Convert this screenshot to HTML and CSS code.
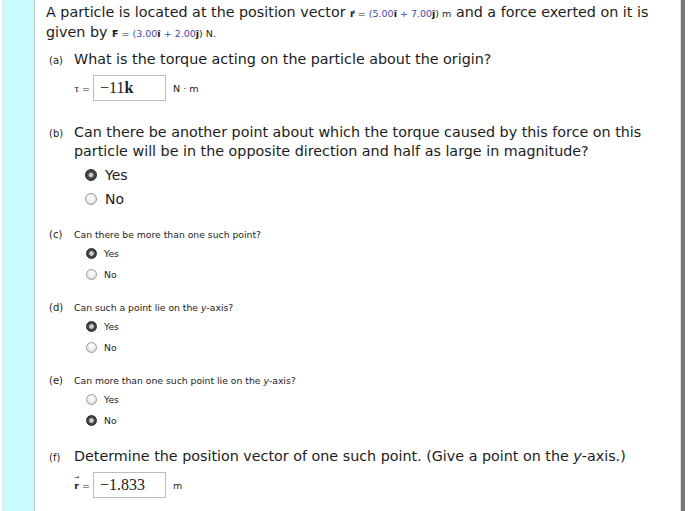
FILE: index.html
```html
<!DOCTYPE html>
<html>
<head>
<meta charset="utf-8">
<link rel="stylesheet" href="styles.css">
</head>
<body>
<div class="page">
  <div class="strip"></div>
  <div class="content">
    <p class="intro">A particle is located at the position vector <span class="m"><span class="vec">r</span> = <span class="num">(5.00</span><b>î</b> <span class="num">+ 7.00</span><b>ĵ</b>) m</span> and a force exerted on it is given by <span class="m"><span class="vec">F</span> = <span class="num">(3.00</span><b>î</b> <span class="num">+ 2.00</span><b>ĵ</b>) N.</span></p>

    <div class="part big q-a">
      <span class="lbl">(a)</span>
      <div class="qtext">What is the torque acting on the particle about the origin?</div>
    </div>
    <div class="answer">
      <span class="alabel"><span class="tau">τ</span> =</span>
      <span class="box">−11<b>k</b></span>
      <span class="unit">N · m</span>
    </div>

    <div class="part big q-b">
      <span class="lbl">(b)</span>
      <div class="qtext">Can there be another point about which the torque caused by this force on this particle will be in the opposite direction and half as large in magnitude?</div>
    </div>
    <div class="choices big-choices">
      <div class="radio"><span class="dot on"></span>Yes</div>
      <div class="radio"><span class="dot"></span>No</div>
    </div>

    <div class="part small q-c">
      <span class="lbl">(c)</span>
      <div class="qtext">Can there be more than one such point?</div>
    </div>
    <div class="choices small-choices">
      <div class="radio"><span class="dot on"></span>Yes</div>
      <div class="radio"><span class="dot"></span>No</div>
    </div>

    <div class="part small q-d">
      <span class="lbl">(d)</span>
      <div class="qtext">Can such a point lie on the <i>y</i>-axis?</div>
    </div>
    <div class="choices small-choices">
      <div class="radio"><span class="dot on"></span>Yes</div>
      <div class="radio"><span class="dot"></span>No</div>
    </div>

    <div class="part small q-e">
      <span class="lbl">(e)</span>
      <div class="qtext">Can more than one such point lie on the <i>y</i>-axis?</div>
    </div>
    <div class="choices small-choices">
      <div class="radio"><span class="dot"></span>Yes</div>
      <div class="radio"><span class="dot on"></span>No</div>
    </div>

    <div class="part big q-f">
      <span class="lbl">(f)</span>
      <div class="qtext">Determine the position vector of one such point. (Give a point on the <i>y</i>-axis.)</div>
    </div>
    <div class="answer">
      <span class="alabel"><span class="vec">r</span> =</span>
      <span class="box">−1.833</span>
      <span class="unit">m</span>
    </div>
  </div>
  <div class="scrollbar"></div>
</div>
</body>
</html>
```

FILE: styles.css
```css
body {
  margin: 0;
  background: #fff;
  color: #1c1c1c;
  font-family: "DejaVu Sans", Verdana, sans-serif;
}
.page {
  display: flex;
  height: 511px;
  overflow: hidden;
}
.strip {
  flex: none;
  width: 31px;
  margin-left: 2px;
  background: #c9fafc;
  border-left: 1px solid #dde6e6;
  border-right: 1px solid #b9cdcd;
}
.content {
  flex: 1;
  padding: 3px 0 0 11px;
}
.scrollbar {
  flex: none;
  width: 4px;
  margin-right: 5px;
  background: #777;
  border-left: 1px solid #e2e2e2;
}
.intro {
  margin: 0;
  font-size: 14.3px;
  line-height: 19px;
}
.m {
  font-size: 9.5px;
}
.m b {
  color: #111;
}
.num {
  color: #4848a8;
}
.vec {
  position: relative;
  font-weight: bold;
  font-size: 9.5px;
}
.vec::after {
  content: "\2192";
  position: absolute;
  left: 0;
  top: -7px;
  font-size: 6px;
  font-weight: normal;
}
.part {
  display: flex;
  align-items: baseline;
  padding-left: 3px;
}
.lbl {
  flex: none;
  width: 25px;
  font-size: 10px;
}
.big .qtext {
  font-size: 14.3px;
  line-height: 19px;
}
.small .qtext {
  font-size: 9.25px;
  line-height: 17px;
}
.q-a { margin-top: 7px; }
.q-b { margin-top: 22px; }
.q-c { margin-top: 15px; }
.q-d { margin-top: 14px; }
.q-e { margin-top: 14px; }
.q-f { margin-top: 16px; }

.answer {
  display: flex;
  align-items: center;
  margin-top: 6px;
  height: 26px;
  padding-left: 20px;
}
.alabel {
  flex: none;
  width: 24px;
  text-align: right;
  font-size: 9.5px;
  margin-right: 3px;
}
.tau {
  font-family: "Liberation Serif", serif;
  font-size: 11px;
}
.box {
  box-sizing: border-box;
  width: 73px;
  height: 26px;
  border: 1px solid #bcbcbc;
  padding-left: 6px;
  display: flex;
  align-items: center;
  font-family: "Liberation Serif", serif;
  font-size: 16px;
  color: #222;
}
.unit {
  margin-left: 7px;
  font-size: 9.5px;
}
.choices {
  padding-left: 39px;
}
.big-choices {
  margin-top: 2px;
}
.radio {
  display: flex;
  align-items: center;
}
.big-choices .radio {
  height: 24px;
  font-size: 14px;
}
.small-choices .radio {
  height: 21px;
  font-size: 9.25px;
  padding-left: 1px;
}
.dot {
  box-sizing: border-box;
  flex: none;
  width: 12px;
  height: 12px;
  border-radius: 50%;
  border: 1px solid #9a9a9a;
  background: radial-gradient(circle at 50% 35%, #ffffff 0, #f2f2f2 40%, #cfcfcf 100%);
  margin-right: 8px;
}
.small-choices .dot {
  width: 11px;
  height: 11px;
  margin-right: 7px;
}
.dot.on {
  border-color: #2a2a2a;
  background: radial-gradient(circle, #d8d8d8 0, #bdbdbd 2px, #4a4a4a 2.8px, #333 100%);
}
```
